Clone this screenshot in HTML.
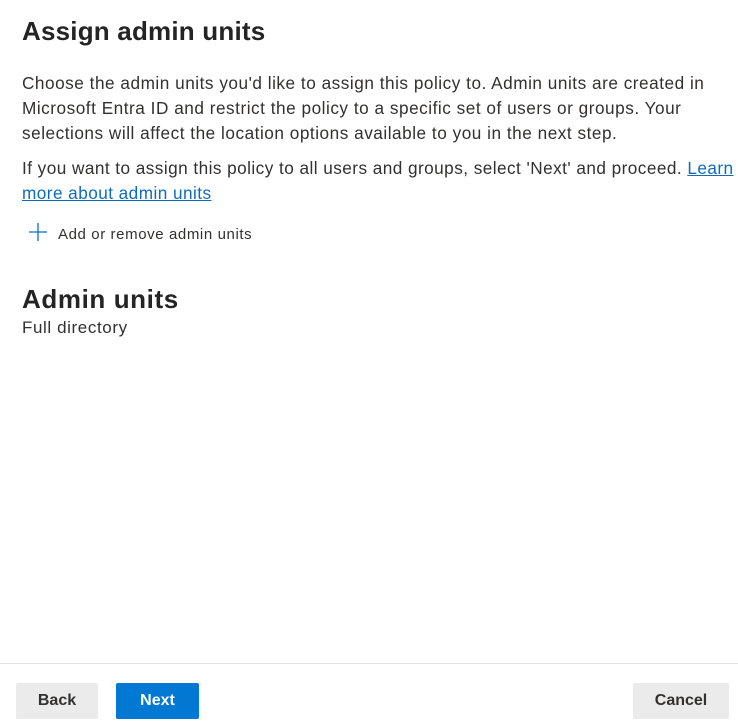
<!DOCTYPE html>
<html><head><style>
body{margin:0;width:738px;height:725px;background:#fff;font-family:"Liberation Sans",sans-serif;color:#323130;position:relative;overflow:hidden}
h1{position:absolute;left:22px;top:16px;margin:0;font-size:26px;font-weight:bold;color:#242424;letter-spacing:0.2px}
p{position:absolute;left:22px;margin:0;font-size:17.2px;line-height:25px;color:#323130;letter-spacing:0.52px;white-space:nowrap}
a{color:#0f6cbd;text-decoration:underline}
.add{position:absolute;left:28px;top:222px;font-size:15px;color:#323130;letter-spacing:0.6px}
.add svg{vertical-align:-3px;margin-right:10px}
h2{position:absolute;left:22px;top:284px;margin:0;font-size:26px;font-weight:bold;color:#242424;letter-spacing:0.6px}
.fd{position:absolute;left:22px;top:318px;font-size:17px;letter-spacing:0.6px}
.line{position:absolute;left:0;right:0;top:663px;border-top:1px solid #e1dfdd}
.b{position:absolute;top:683px;height:36px;line-height:36px;text-align:center;font-size:16px;font-weight:bold;border-radius:2px}
.g{background:#ebebeb;color:#323130}
</style></head><body>
<h1>Assign admin units</h1>
<p style="top:71px">Choose the admin units you'd like to assign this policy to. Admin units are created in<br>Microsoft Entra ID and restrict the policy to a specific set of users or groups. Your<br>selections will affect the location options available to you in the next step.</p>
<p style="top:156px;letter-spacing:0.45px">If you want to assign this policy to all users and groups, select 'Next' and proceed. <a>Learn</a><br><a>more about admin units</a></p>
<div class="add"><svg width="20" height="20" viewBox="0 0 20 20"><path d="M10 1v18M1 10h18" stroke="#0f6cbd" stroke-width="1.3"/></svg>Add or remove admin units</div>
<h2>Admin units</h2>
<div class="fd">Full directory</div>
<div class="line"></div>
<div class="b g" style="left:16px;width:82px">Back</div>
<div class="b" style="left:116px;width:83px;background:#0078d4;color:#fff">Next</div>
<div class="b g" style="left:633px;width:96px">Cancel</div>
</body></html>
